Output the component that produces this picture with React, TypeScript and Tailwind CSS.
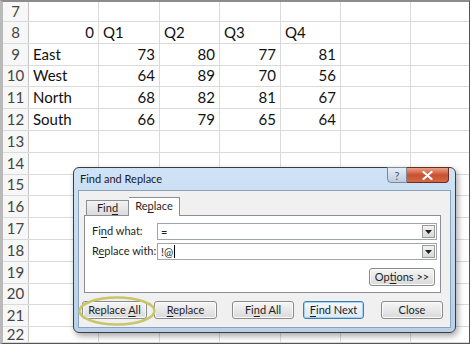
import React from "react";

const COLS = [70, 61, 60, 61, 60, 70];

type Cell = { t: string; a?: "l" | "r" };

const DATA: Record<number, Cell[]> = {
  8: [{ t: "0", a: "r" }, { t: "Q1" }, { t: "Q2" }, { t: "Q3" }, { t: "Q4" }],
  9: [{ t: "East" }, { t: "73", a: "r" }, { t: "80", a: "r" }, { t: "77", a: "r" }, { t: "81", a: "r" }],
  10: [{ t: "West" }, { t: "64", a: "r" }, { t: "89", a: "r" }, { t: "70", a: "r" }, { t: "56", a: "r" }],
  11: [{ t: "North" }, { t: "68", a: "r" }, { t: "82", a: "r" }, { t: "81", a: "r" }, { t: "67", a: "r" }],
  12: [{ t: "South" }, { t: "66", a: "r" }, { t: "79", a: "r" }, { t: "65", a: "r" }, { t: "64", a: "r" }],
};

function Row({ n }: { n: number }) {
  const cells = DATA[n] || [];
  const h = n === 7 ? "h-[20px]" : n === 22 ? "h-[16px]" : "h-[21.8px]";
  return (
    <div className={`flex ${h} shrink-0 border-b border-[#dadada]`}>
      <div className="w-[26px] shrink-0 border-r border-[#c4c4c4] bg-[#f7f7f7] flex items-center justify-center text-[15px] text-[#444] leading-none">
        {n}
      </div>
      {COLS.map((w, i) => {
        const c = cells[i];
        return (
          <div
            key={i}
            style={{ width: w }}
            className={`shrink-0 border-r border-[#dadada] flex items-center px-[4px] text-[15px] text-[#111] leading-none ${
              c && c.a === "r" ? "justify-end" : "justify-start"
            }`}
          >
            {c ? c.t : ""}
          </div>
        );
      })}
      <div className="flex-1" />
    </div>
  );
}

function U({ children }: { children: React.ReactNode }) {
  return <span className="underline underline-offset-[2px]">{children}</span>;
}

function Btn({
  children,
  className = "",
  def = false,
}: {
  children: React.ReactNode;
  className?: string;
  def?: boolean;
}) {
  return (
    <div
      className={`h-[18px] rounded-[3px] border flex items-center justify-center text-[11px] text-[#1e1e1e] ${
        def
          ? "border-[#3c7fb1] bg-gradient-to-b from-[#f4f9fd] to-[#dbe8f3] shadow-[inset_0_0_0_1px_#a8d2ef]"
          : "border-[#8a8a8a] bg-gradient-to-b from-[#f6f6f6] to-[#d9d9d9] shadow-[inset_0_0_0_1px_#fcfcfc]"
      } ${className}`}
    >
      <span className="whitespace-pre">{children}</span>
    </div>
  );
}

function Combo({ children }: { children?: React.ReactNode }) {
  return (
    <div className="h-[17px] ml-[72px] mr-[3px] flex-1 border border-[#a0a4ab] bg-white flex items-center pl-[3px] text-[11px] text-[#1e1e1e]">
      <div className="flex-1 flex items-center">{children}</div>
      <div className="w-[13px] h-[13px] mr-[1px] border border-[#9a9a9a] bg-gradient-to-b from-[#f4f4f4] to-[#d8d8d8] flex items-center justify-center">
        <svg width="7" height="4" viewBox="0 0 7 4">
          <path d="M0 0 H7 L3.5 4 Z" fill="#222" />
        </svg>
      </div>
    </div>
  );
}

export default function App() {
  const rows = [];
  for (let n = 7; n <= 22; n++) rows.push(n);
  return (
    <div
      className="w-[474px] h-[348px] relative bg-white overflow-hidden"
      style={{ fontFamily: "Lato, 'Open Sans', sans-serif" }}
    >
      <div className="w-[470px] h-[344px] border-t-2 border-t-[#8c8c8c] border-l-[3px] border-l-[#b9b9b9] border-r border-r-[#555] border-b border-b-[#555] flex flex-col overflow-hidden">
        {rows.map((n) => (
          <Row key={n} n={n} />
        ))}
      </div>

      {/* Dialog window */}
      <div className="absolute left-[73px] top-[167px] w-[383px] h-[166px] rounded-[6px] border border-[#3d3d3d] bg-gradient-to-b from-[#cfe2f6] via-[#c3d9f0] to-[#b8d0ea] shadow-[2px_3px_6px_rgba(0,0,0,0.35)] flex flex-col px-[4px] pb-[4px]">
        <div className="h-[22px] shrink-0 flex items-center pl-[2px] relative">
          <span className="text-[11px] text-[#1a1a1a]">Find and Replace</span>
          <div className="absolute right-[2px] top-[-1px] flex">
            <div className="w-[20px] h-[16px] border border-[#7d8898] rounded-bl-[4px] bg-gradient-to-b from-[#e6eef7] to-[#bccde0] flex items-center justify-center text-[11px] text-[#556] leading-none">
              ?
            </div>
            <div className="w-[42px] h-[16px] border border-l-0 border-[#6b2d20] rounded-br-[4px] bg-gradient-to-b from-[#e8a08a] via-[#c8502f] to-[#d26a45] flex items-center justify-center">
              <svg width="11" height="9" viewBox="0 0 11 9">
                <path d="M1.5 1 L9.5 8 M9.5 1 L1.5 8" stroke="#fff" strokeWidth="2.2" strokeLinecap="round" />
              </svg>
            </div>
          </div>
        </div>

        <div className="flex-1 bg-[#f0f0f0] border border-[#8da2bb] flex flex-col relative">
          {/* tabs */}
          <div className="h-[24px] shrink-0 flex items-end pl-[7px]">
            <div className="w-[43px] h-[15px] border border-b-0 border-[#8c8e94] bg-gradient-to-b from-[#f2f2f2] to-[#dcdcdc] flex items-center justify-center text-[11px] text-[#1e1e1e]">
              <span>
                Fin<U>d</U>
              </span>
            </div>
            <div className="w-[51px] h-[19px] border border-b-0 border-l-0 border-[#8c8e94] bg-white -mb-px relative z-10 flex items-center justify-center text-[11px] text-[#1e1e1e] pb-[1px]">
              <span>
                Re<U>p</U>lace
              </span>
            </div>
          </div>
          <div className="ml-[5px] mr-[9px] h-[78px] border border-[#8c8e94] bg-white flex flex-col pt-[7px]">
            <div className="flex items-center relative">
              <span className="absolute left-[7px] text-[11px] text-[#1e1e1e]">
                Fi<U>n</U>d what:
              </span>
              <Combo>
                <span className="text-[11px] leading-none">=</span>
              </Combo>
            </div>
            <div className="flex items-center relative mt-[3px]">
              <span className="absolute left-[7px] text-[11px] text-[#1e1e1e]">
                R<U>e</U>place with:
              </span>
              <Combo>
                <span className="text-[11px] leading-none">!@</span>
                <span className="w-px h-[13px] bg-black ml-[1px]" />
              </Combo>
            </div>
            <div className="flex justify-end mr-[5px] mt-[8px]">
              <Btn className="w-[66px]">
                Op<U>t</U>ions &gt;&gt;
              </Btn>
            </div>
          </div>
          <div className="flex mt-[8px]">
            <Btn className="ml-[3px] w-[65px]">
              Replace <U>A</U>ll
            </Btn>
            <Btn className="ml-[7px] w-[63px]">
              <U>R</U>eplace
            </Btn>
            <Btn className="ml-[15px] w-[62px]">
              Fi<U>n</U>d All
            </Btn>
            <Btn def className="ml-[9px] w-[61px]">
              <U>F</U>ind Next
            </Btn>
            <Btn className="ml-[17px] w-[62px]">Close</Btn>
          </div>
        </div>

        {/* highlight ellipse */}
        <svg
          className="absolute left-[3px] top-[127px] pointer-events-none"
          width="80"
          height="32"
          viewBox="0 0 80 32"
        >
          <ellipse cx="40" cy="16" rx="37.5" ry="13.5" fill="none" stroke="#c8c66a" strokeWidth="2.5" />
        </svg>
      </div>
    </div>
  );
}
